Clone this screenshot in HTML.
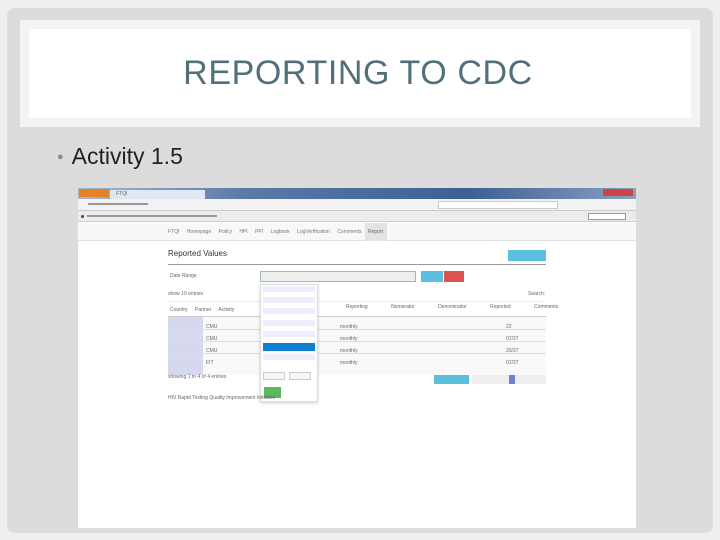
<!DOCTYPE html><html><head><style>
*{margin:0;padding:0;box-sizing:border-box}
body{width:720px;height:540px;background:#efefef;font-family:"Liberation Sans",sans-serif;position:relative;overflow:hidden}
.card{position:absolute;left:7px;top:8px;width:706px;height:525px;background:#dcdcdc;border-radius:8px}
.tb{position:absolute;left:20px;top:20px;width:680px;height:107px;background:#f3f3f3}
.ti{position:absolute;left:29px;top:29px;width:662px;height:89px;background:#fff}
.title{position:absolute;left:-2px;width:720px;top:54px;text-align:center;font-size:34px;color:#52707a;letter-spacing:0.6px}
.bul{position:absolute;left:57px;top:143px;font-size:23px;color:#222}
.bul span{color:#7a9099;font-size:11px;margin-right:8px;vertical-align:4px}
.ss{position:absolute;left:78px;top:188px;width:558px;height:340px;background:#fff;overflow:hidden;font-size:5px;color:#666;line-height:1}
.a{position:absolute;white-space:nowrap}
</style></head><body>
<div class="card"></div><div class="tb"></div><div class="ti"></div>
<div class="title">REPORTING TO CDC</div>
<div class="bul"><span>●</span>Activity 1.5</div>
<div class="ss">
<div class="a" style="left:0;top:0;width:558px;height:11px;background:linear-gradient(90deg,#a8b8cc,#5a7aa8 30%,#3d5f95 70%,#8aa0c0)"></div>
<div class="a" style="left:1px;top:1px;width:30px;height:8px;background:#e2832a"></div>
<div class="a" style="left:32px;top:2px;width:95px;height:9px;background:#dfe7f2;font-size:5px;padding:2px 6px">FTQI</div>
<div class="a" style="left:525px;top:1px;width:30px;height:7px;background:#c44"></div>
<div class="a" style="left:0;top:11px;width:558px;height:12px;background:#f2f2f2;border-bottom:1px solid #ccc"></div>
<div class="a" style="left:10px;top:15px;width:60px;height:2px;background:#999"></div>
<div class="a" style="left:360px;top:13px;width:120px;height:8px;background:#fff;border:1px solid #ccc"></div>
<div class="a" style="left:0;top:23px;width:558px;height:11px;background:#ececec;border-bottom:1px solid #ccc"></div>
<div class="a" style="left:3px;top:27px;width:3px;height:3px;background:#1e4f9a;border-radius:50%"></div>
<div class="a" style="left:9px;top:27px;width:130px;height:2px;background:#999"></div>
<div class="a" style="left:510px;top:25px;width:38px;height:7px;background:#fff;border:1px solid #999"></div>
<div class="a" style="left:0;top:35px;width:558px;height:18px;background:#f8f8f8;border-bottom:1px solid #e0e0e0"></div>
<div class="a" style="left:90px;top:42px;font-size:5px;color:#777;word-spacing:6px">FTQI Homepage Policy HPI PPI Logbook LogVerification Comments</div>
<div class="a" style="left:287px;top:35px;width:22px;height:18px;background:#e3e3e3;font-size:5px;padding:7px 3px">Report</div>
<div class="a" style="left:90px;top:62px;font-size:8px;color:#333">Reported Values</div>
<div class="a" style="left:430px;top:62px;width:38px;height:11px;background:#5bc0de"></div>
<div class="a" style="left:90px;top:76px;width:378px;height:1px;background:#999"></div>
<div class="a" style="left:92px;top:86px">Date Range</div>
<div class="a" style="left:182px;top:83px;width:156px;height:11px;background:#eee;border:1px solid #9bb"></div>
<div class="a" style="left:343px;top:83px;width:22px;height:11px;background:#5bc0de"></div>
<div class="a" style="left:366px;top:83px;width:20px;height:11px;background:#d9534f"></div>
<div class="a" style="left:90px;top:104px">show 10 entries</div>
<div class="a" style="left:450px;top:104px">Search:</div>
<div class="a" style="left:90px;top:113px;width:378px;height:16px;border-bottom:1px solid #ccc;border-top:1px solid #eee"></div>
<div class="a" style="left:92px;top:120px;word-spacing:6px">Country Partner Activity</div>
<div class="a" style="left:268px;top:117px;word-spacing:22px">Reporting Numerator Denominator Reported Comments</div>
<div class="a" style="left:90px;top:129px;width:378px;height:58px;background:#f9f9f9"></div>
<div class="a" style="left:90px;top:129px;width:35px;height:58px;background:#d6d8ef"></div>
<div class="a" style="left:90px;top:141px;width:378px;height:1px;background:#ddd"></div>
<div class="a" style="left:90px;top:153px;width:378px;height:1px;background:#ddd"></div>
<div class="a" style="left:90px;top:165px;width:378px;height:1px;background:#ddd"></div>
<div class="a" style="left:128px;top:133px;line-height:12px">CMU<br>CMU<br>CMU<br>FIT</div>
<div class="a" style="left:262px;top:133px;line-height:12px">monthly<br>monthly<br>monthly<br>monthly</div>
<div class="a" style="left:428px;top:133px;line-height:12px">22<br>07/27<br>20/27<br>07/27</div>
<div class="a" style="left:90px;top:187px">showing 1 to 4 of 4 entries</div>
<div class="a" style="left:356px;top:187px;width:35px;height:9px;background:#5bc0de"></div>
<div class="a" style="left:394px;top:187px;width:74px;height:9px;background:#eee"></div>
<div class="a" style="left:431px;top:187px;width:6px;height:9px;background:#6f7fd8"></div>
<div class="a" style="left:182px;top:96px;width:58px;height:118px;background:#fff;border:1px solid #ddd;box-shadow:0 1px 3px rgba(0,0,0,.2)"></div>
<div class="a" style="left:185px;top:98px;width:52px;height:6px;background:#eef"></div>
<div class="a" style="left:185px;top:109px;width:52px;height:6px;background:#eef"></div>
<div class="a" style="left:185px;top:120px;width:52px;height:6px;background:#eef"></div>
<div class="a" style="left:185px;top:132px;width:52px;height:6px;background:#eef"></div>
<div class="a" style="left:185px;top:143px;width:52px;height:6px;background:#eef"></div>
<div class="a" style="left:185px;top:155px;width:52px;height:8px;background:#0f7fd0"></div>
<div class="a" style="left:185px;top:166px;width:52px;height:6px;background:#eef"></div>
<div class="a" style="left:185px;top:184px;width:22px;height:8px;border:1px solid #ccc;background:#f5f5f5"></div>
<div class="a" style="left:211px;top:184px;width:22px;height:8px;border:1px solid #ccc;background:#f5f5f5"></div>
<div class="a" style="left:186px;top:199px;width:17px;height:11px;background:#5cb85c"></div>
<div class="a" style="left:90px;top:208px">HIV Rapid Testing Quality Improvement Initiative</div>
</div>
</body></html>
